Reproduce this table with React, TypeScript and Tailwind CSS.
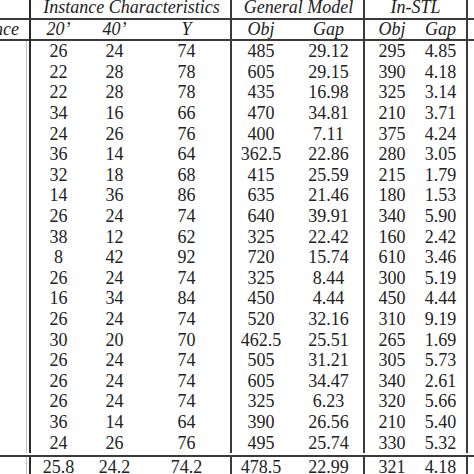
import React from 'react';

// one row per instance: [20', 40', Y, general obj, general gap, in-stl obj, in-stl gap]
const rows: string[][] = [
  ['26', '24', '74', '485', '29.12', '295', '4.85'],
  ['22', '28', '78', '605', '29.15', '390', '4.18'],
  ['22', '28', '78', '435', '16.98', '325', '3.14'],
  ['34', '16', '66', '470', '34.81', '210', '3.71'],
  ['24', '26', '76', '400', '7.11', '375', '4.24'],
  ['36', '14', '64', '362.5', '22.86', '280', '3.05'],
  ['32', '18', '68', '415', '25.59', '215', '1.79'],
  ['14', '36', '86', '635', '21.46', '180', '1.53'],
  ['26', '24', '74', '640', '39.91', '340', '5.90'],
  ['38', '12', '62', '325', '22.42', '160', '2.42'],
  ['8', '42', '92', '720', '15.74', '610', '3.46'],
  ['26', '24', '74', '325', '8.44', '300', '5.19'],
  ['16', '34', '84', '450', '4.44', '450', '4.44'],
  ['26', '24', '74', '520', '32.16', '310', '9.19'],
  ['30', '20', '70', '462.5', '25.51', '265', '1.69'],
  ['26', '24', '74', '505', '31.21', '305', '5.73'],
  ['26', '24', '74', '605', '34.47', '340', '2.61'],
  ['26', '24', '74', '325', '6.23', '320', '5.66'],
  ['36', '14', '64', '390', '26.56', '210', '5.40'],
  ['24', '26', '76', '495', '25.74', '330', '5.32'],
];

const average = ['25.8', '24.2', '74.2', '478.5', '22.99', '321', '4.18'];

const grid =
  'grid grid-cols-[31px_55px_57px_89px_58px_75px_50px_53px_6px]';

const ValueCells: React.FC<{ values: string[] }> = ({ values }) => (
  <>
    <div className="flex items-center justify-center">{values[0]}</div>
    <div className="flex items-center justify-center">{values[1]}</div>
    <div className="flex items-center justify-center border-r-2 border-[#3a3a3a]">
      {values[2]}
    </div>
    <div className="flex items-center justify-center">{values[3]}</div>
    <div className="flex items-center justify-center pl-1 border-r-2 border-[#3a3a3a]">
      {values[4]}
    </div>
    <div className="flex items-center justify-center pl-1">{values[5]}</div>
    <div className="flex items-center justify-center border-r-2 border-[#3a3a3a]">
      {values[6]}
    </div>
    <div />
  </>
);

const LeftCell: React.FC = () => (
  <div className="border-r-2 border-[#2a2a2a] shadow-[inset_-2px_0_0_0_#ffffff,inset_-3px_0_0_0_#c4c4c4]" />
);

export default function App() {
  return (
    <div
      className="w-[474px] h-[474px] overflow-hidden bg-white text-[#222222] text-[18px]"
      style={{ fontFamily: '"Liberation Serif", "Times New Roman", serif' }}
    >
      <div className="-mt-[4px]">
        {/* Group header */}
        <div className={`${grid} h-[24px] border-b-2 border-[#3a3a3a] italic leading-none`}>
          <div className="border-r-2 border-[#2a2a2a]" />
          <div className="col-span-3 flex items-center justify-center pl-[2px] border-r-2 border-[#3a3a3a]">
            Instance Characteristics
          </div>
          <div className="col-span-2 flex items-center justify-center pl-[2px] border-r-2 border-[#3a3a3a]">
            General Model
          </div>
          <div className="col-span-2 flex items-center justify-center border-r-2 border-[#3a3a3a]">
            In-STL
          </div>
          <div />
        </div>

        {/* Column header */}
        <div className={`${grid} h-[21px] border-b-2 border-[#3a3a3a] italic leading-none`}>
          <div className="flex items-center justify-end pr-[10px] pb-1 whitespace-nowrap border-r-2 border-[#2a2a2a]">
            Instance
          </div>
          <div className="flex items-center justify-center pb-1">20’</div>
          <div className="flex items-center justify-center pb-1">40’</div>
          <div className="flex items-center justify-center pb-1 border-r-2 border-[#3a3a3a]">Y</div>
          <div className="flex items-center justify-center pb-1">Obj</div>
          <div className="flex items-center justify-center pl-1 pb-1 border-r-2 border-[#3a3a3a]">Gap</div>
          <div className="flex items-center justify-center pl-1 pb-1">Obj</div>
          <div className="flex items-center justify-center pb-1 border-r-2 border-[#3a3a3a]">Gap</div>
          <div />
        </div>

        {/* Instances */}
        <div className="pb-[2px]">
          {rows.map((r, i) => (
            <div key={i} className={`${grid} h-[20.6px] leading-none`}>
              <LeftCell />
              <ValueCells values={r} />
            </div>
          ))}
        </div>

        {/* Average */}
        <div className={`${grid} h-[24px] border-t-2 border-[#3a3a3a] leading-none pb-[2px]`}>
          <LeftCell />
          <ValueCells values={average} />
        </div>
      </div>
    </div>
  );
}
